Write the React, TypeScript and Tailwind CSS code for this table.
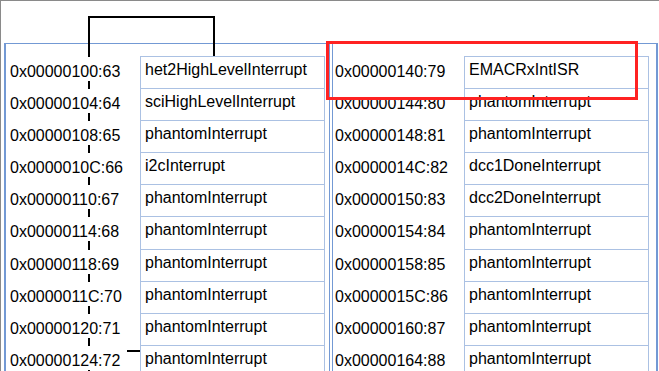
import React from "react";

type Vec = { addr: string; isr: string };

const left: Vec[] = [
  { addr: "0x00000100:63", isr: "het2HighLevelInterrupt" },
  { addr: "0x00000104:64", isr: "sciHighLevelInterrupt" },
  { addr: "0x00000108:65", isr: "phantomInterrupt" },
  { addr: "0x0000010C:66", isr: "i2cInterrupt" },
  { addr: "0x00000110:67", isr: "phantomInterrupt" },
  { addr: "0x00000114:68", isr: "phantomInterrupt" },
  { addr: "0x00000118:69", isr: "phantomInterrupt" },
  { addr: "0x0000011C:70", isr: "phantomInterrupt" },
  { addr: "0x00000120:71", isr: "phantomInterrupt" },
  { addr: "0x00000124:72", isr: "phantomInterrupt" },
];

const right: Vec[] = [
  { addr: "0x00000140:79", isr: "EMACRxIntISR" },
  { addr: "0x00000144:80", isr: "phantomInterrupt" },
  { addr: "0x00000148:81", isr: "phantomInterrupt" },
  { addr: "0x0000014C:82", isr: "dcc1DoneInterrupt" },
  { addr: "0x00000150:83", isr: "dcc2DoneInterrupt" },
  { addr: "0x00000154:84", isr: "phantomInterrupt" },
  { addr: "0x00000158:85", isr: "phantomInterrupt" },
  { addr: "0x0000015C:86", isr: "phantomInterrupt" },
  { addr: "0x00000160:87", isr: "phantomInterrupt" },
  { addr: "0x00000164:88", isr: "phantomInterrupt" },
];

function Column({ rows, labelW, labelMl }: { rows: Vec[]; labelW: string; labelMl: string }) {
  return (
    <div className="flex flex-col">
      {rows.map((r) => (
        <div key={r.addr} className="flex h-[32.1px] shrink-0">
          <div className={labelW}>
            <div className={`relative z-10 mt-[1px] h-[24px] w-[118px] bg-white pl-[1px] pt-[6px] leading-[18px] ${labelMl}`}>
              {r.addr}
            </div>
          </div>
          <div className="relative z-10 w-[185px] border-x border-t border-[#abc1e3] bg-white pl-[4px] pt-[4px] leading-[18px]">
            {r.isr}
          </div>
        </div>
      ))}
    </div>
  );
}

export default function App() {
  return (
    <div
      className="relative h-[371px] w-[659px] overflow-hidden border-l border-t border-[#8a8a8a] bg-white text-[16px] text-black"
      style={{ fontFamily: '"Liberation Sans", Arial, sans-serif' }}
    >
      <div className="h-[42px]" />
      <div className="ml-[3px] flex h-[400px] w-[654px] border-x-2 border-t border-[#7399d4] pt-[12px]">
        <div className="w-[319px]">
          <Column rows={left} labelW="w-[134px]" labelMl="ml-[3px]" />
        </div>
        <div className="-mt-[12px] ml-[4px] w-[4px] border-x border-[#7399d4]" />
        <div className="w-[316px]">
          <Column rows={right} labelW="w-[131px]" labelMl="ml-[1px]" />
        </div>
      </div>

      {/* connector lines */}
      <div className="absolute left-[87px] top-[15px] h-[360px] w-[2px] bg-black" />
      <div className="absolute left-[87px] top-[15px] h-[2px] w-[127px] bg-black" />
      <div className="absolute left-[212px] top-[15px] h-[41px] w-[2px] bg-black" />
      <div className="absolute left-[87px] top-[349px] h-[2px] w-[53px] bg-black" />

      {/* highlight */}
      <div className="absolute left-[325px] top-[40px] z-20 h-[59px] w-[312px] border-[3px] border-[#ff2222]" />
    </div>
  );
}
